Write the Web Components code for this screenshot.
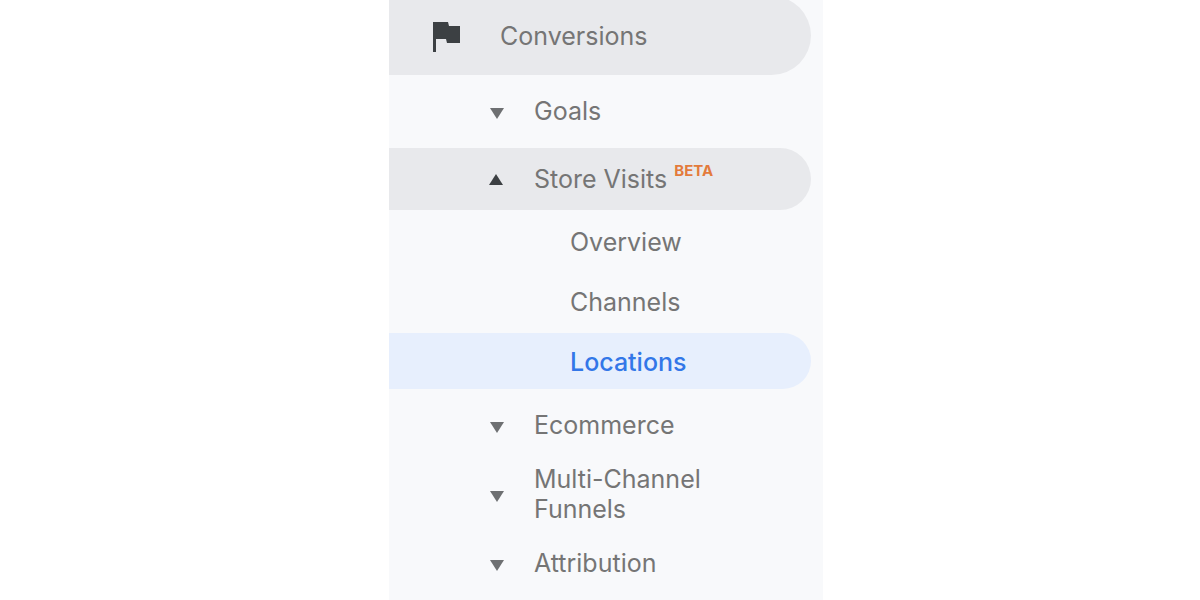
<!DOCTYPE html>
<html lang="en">
<head>
<meta charset="utf-8">
<meta name="viewport" content="width=device-width, initial-scale=1">
<title>Conversions</title>
<style>
  body {
    margin: 0;
    background: #fff;
    color: #757575;
    font-family: Inter, "Open Sans", sans-serif;
    font-size: 25px;
    line-height: 30px;
  }
</style>
</head>
<body>
<nav-page>
  <nav-section label="Conversions">
    <nav-group label="Goals"></nav-group>
    <nav-group label="Store Visits" badge="BETA" open>
      <nav-entry href="#overview">Overview</nav-entry>
      <nav-entry href="#channels">Channels</nav-entry>
      <nav-entry href="#locations" current>Locations</nav-entry>
    </nav-group>
    <nav-group label="Ecommerce"></nav-group>
    <nav-group label="Multi-Channel Funnels"></nav-group>
    <nav-group label="Attribution"></nav-group>
  </nav-section>
</nav-page>

<script>
function render(host, html) {
  const template = document.createElement("template");
  template.innerHTML = html;
  host.attachShadow({ mode: "open" }).appendChild(template.content);
}

class NavPage extends HTMLElement {
  constructor() {
    super();
    render(this, `
      <style>
        :host {
          display: grid;
          grid-template-columns: 389fr minmax(434px, 434fr) 377fr;
          min-height: 100vh;
          overflow: hidden;
        }
        nav {
          grid-column: 2;
          box-sizing: border-box;
          padding-right: 12px;
          background: #f8f9fb;
        }
      </style>
      <nav aria-label="Reports"><slot></slot></nav>
    `);
  }
}

class NavSection extends HTMLElement {
  constructor() {
    super();
    render(this, `
      <style>
        :host { display: block; }
        button {
          display: flex;
          align-items: center;
          gap: 40px;
          box-sizing: border-box;
          width: 100%;
          height: 79px;
          margin: -4px 0 0;
          padding: 0 40px 0 43px;
          border: 0;
          border-radius: 0 40px 40px 0;
          background: #e8e9ec;
          color: inherit;
          font: inherit;
          text-align: left;
          cursor: pointer;
        }
        svg { flex: none; display: block; margin-top: 2px; }
        .items { padding-top: 9px; }
      </style>
      <button type="button" aria-expanded="true">
        <svg width="28" height="30" viewBox="0 0 28 30" aria-hidden="true">
          <path fill="#3c4043" d="M1 0h15l1 4h11v17H15l-1-4H4v13H1z"/>
        </svg>
        <span></span>
      </button>
      <div class="items"><slot></slot></div>
    `);
  }

  connectedCallback() {
    this.shadowRoot.querySelector("span").textContent = this.getAttribute("label");
  }
}

class NavGroup extends HTMLElement {
  constructor() {
    super();
    render(this, `
      <style>
        :host { display: block; }
        button {
          display: flex;
          align-items: center;
          gap: 30px;
          width: 100%;
          box-sizing: border-box;
          margin: 0;
          padding: 12px 40px 12px 100px;
          border: 0;
          border-radius: 0 32px 32px 0;
          background: none;
          color: inherit;
          font: inherit;
          text-align: left;
          cursor: pointer;
        }
        svg { flex: none; display: block; margin-top: 4px; fill: #6e7072; }
        sup {
          color: #e37b3c;
          font-size: 15px;
          font-weight: 700;
          line-height: 0;
          vertical-align: 12px;
        }
        .items { display: none; }
        :host([open]) button {
          margin-top: 10px;
          padding-top: 16px;
          padding-bottom: 16px;
          background: #e8e9ec;
        }
        :host([open]) svg {
          margin-top: 0;
          fill: #3c4043;
          transform: rotate(180deg);
        }
        :host([open]) .items {
          display: grid;
          gap: 4px;
          padding: 3px 0 9px;
        }
      </style>
      <button type="button">
        <svg width="15" height="11" viewBox="0 0 15 11" aria-hidden="true">
          <path d="M1 0h14L8 11z"/>
        </svg>
        <span></span>
      </button>
      <div class="items"><slot></slot></div>
    `);
  }

  connectedCallback() {
    const label = this.shadowRoot.querySelector("span");
    label.textContent = this.getAttribute("label");
    if (this.hasAttribute("badge")) {
      const badge = document.createElement("sup");
      badge.textContent = this.getAttribute("badge");
      label.append(" ", badge);
    }

    const button = this.shadowRoot.querySelector("button");
    button.setAttribute("aria-expanded", this.hasAttribute("open"));
    button.addEventListener("click", () => {
      button.setAttribute("aria-expanded", this.toggleAttribute("open"));
    });
  }
}

class NavEntry extends HTMLElement {
  constructor() {
    super();
    render(this, `
      <style>
        :host { display: block; }
        a {
          display: block;
          padding: 14px 40px 12px 181px;
          border-radius: 0 28px 28px 0;
          color: inherit;
          text-decoration: none;
        }
        a[aria-current] {
          background: #e7effd;
          color: #3377e8;
          font-weight: 500;
        }
      </style>
      <a><slot></slot></a>
    `);
  }

  connectedCallback() {
    const link = this.shadowRoot.querySelector("a");
    link.href = this.getAttribute("href");
    if (this.hasAttribute("current")) {
      link.setAttribute("aria-current", "page");
    }
  }
}

customElements.define("nav-page", NavPage);
customElements.define("nav-section", NavSection);
customElements.define("nav-group", NavGroup);
customElements.define("nav-entry", NavEntry);
</script>
</body>
</html>
